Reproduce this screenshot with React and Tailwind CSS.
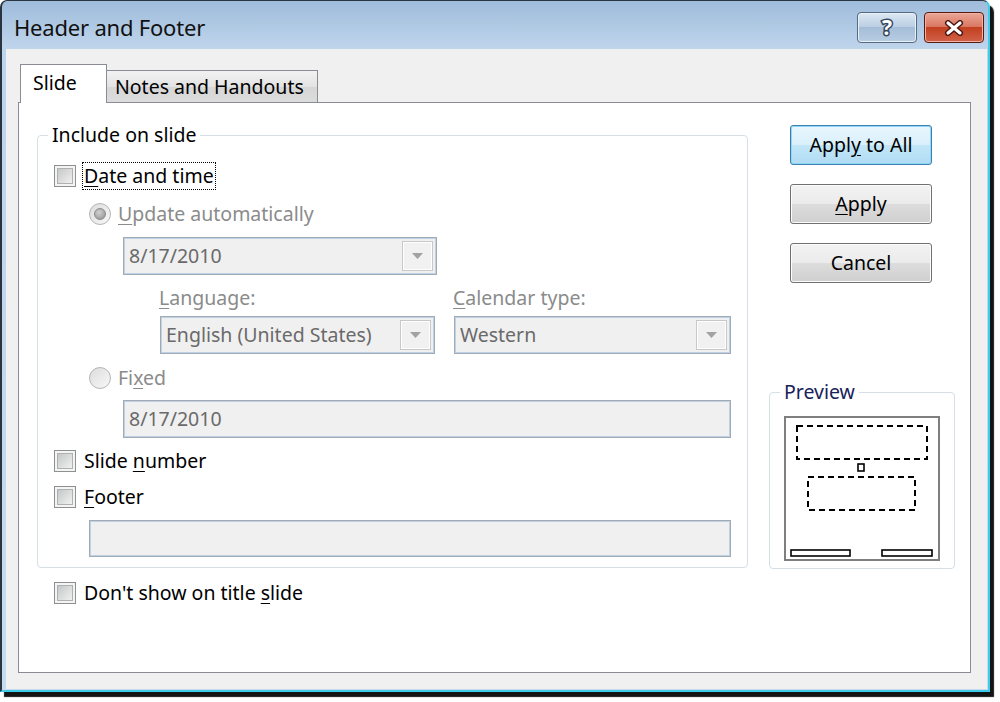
import React from 'react'

function CheckBox() {
  return (
    <div className="flex h-[22px] w-[22px] shrink-0 items-center justify-center border border-[#8e8f8f] bg-[#f4f4f4] p-[2px]">
      <div className="h-full w-full border border-[#aeb0b2] bg-[linear-gradient(135deg,#c6c7c8,#f0f0f0)]" />
    </div>
  )
}

function Radio({ checked }) {
  return (
    <div className="flex h-[22px] w-[22px] shrink-0 items-center justify-center rounded-full border border-[#b4b4b4] bg-[linear-gradient(135deg,#dcdcdc,#f8f8f8)]">
      {checked && (
        <div className="h-[12px] w-[12px] rounded-full border border-[#8a8a8a] bg-[radial-gradient(circle_at_40%_35%,#d0d0d0,#8f8f8f)]" />
      )}
    </div>
  )
}

function Field({ value, className, arrow }) {
  return (
    <div className={`flex border border-[#a3aab2] bg-[#f0f0f0] ${className}`}>
      <div className="flex flex-1 items-center border border-[#bdd1e7] pl-[4px] pr-[2px]">
        <span className="flex-1 text-[#6a6a6a]">{value}</span>
        {arrow && (
          <div className="flex h-[30px] w-[31px] items-center justify-center border border-[#c8c8c8] bg-[#f1f1f1] shadow-[inset_0_0_0_1px_#ffffff]">
            <svg width="11" height="6" viewBox="0 0 11 6">
              <path d="M0 0h11L5.5 6z" fill="#a2a2a2" />
            </svg>
          </div>
        )}
      </div>
    </div>
  )
}

function Button({ children, focused, className }) {
  return (
    <button
      className={`flex h-[40px] w-[142px] items-center justify-center rounded-[3px] border text-black ${
        focused
          ? 'border-[#3c7fb1] bg-[linear-gradient(#e9f6fd,#d9f0fc_50%,#c2e6f8_50%,#b1dcf4)] shadow-[inset_0_0_0_1px_#8fd6f7]'
          : 'border-[#707070] bg-[linear-gradient(#f2f2f2,#ebebeb_50%,#dddddd_50%,#cfcfcf)] shadow-[inset_0_0_0_1px_#fcfcfc]'
      } ${className}`}
    >
      {children}
    </button>
  )
}

export default function App() {
  return (
    <div className="h-[702px] w-[1000px] overflow-hidden bg-white font-['Noto_Sans',sans-serif] text-[19.5px] leading-none text-black">
      <div className="flex h-[692px] w-[990px] flex-col rounded-t-[7px] border-t border-r-2 border-b-2 border-l-2 border-t-[#2a3440] border-l-[#2a3440] border-r-[#3ccdea] border-b-[#3ccdea] bg-[linear-gradient(#9fbcdb,#bed4eb_46px,#c8dbee)] shadow-[4px_5px_1px_rgba(0,0,0,0.92)]">
        {/* Title bar */}
        <div className="flex h-[48px] shrink-0 items-start pl-[12px]">
          <span className="mt-[15px] text-[22px] tracking-[-0.2px] text-[#111]">Header and Footer</span>
          <div className="ml-auto mt-[11px] mr-[4px] flex gap-[7px]">
            <div className="flex h-[31px] w-[60px] items-center justify-center rounded-[4px] border border-[#55697f] bg-[linear-gradient(#dce7f3,#b9cde2_50%,#a5bdd7_50%,#b7cde3)] shadow-[inset_0_0_0_1px_#e8f0f8]">
              <span className="text-[21px] font-bold text-white [paint-order:stroke_fill] [-webkit-text-stroke:3px_#34475c]">?</span>
            </div>
            <div className="flex h-[31px] w-[60px] items-center justify-center rounded-[4px] border border-[#5a1a12] bg-[linear-gradient(#eba797,#d8755f_50%,#c2401f_50%,#d1624a)] shadow-[inset_0_0_0_1px_#f0b3a4]">
              <svg width="20" height="16" viewBox="0 0 20 16">
                <path d="M4 3l12 10M16 3L4 13" stroke="#4a1610" strokeWidth="6" strokeLinecap="round" />
                <path d="M4 3l12 10M16 3L4 13" stroke="#ffffff" strokeWidth="3.2" strokeLinecap="round" />
              </svg>
            </div>
          </div>
        </div>

        {/* Client area */}
        <div className="mb-[1px] ml-[4px] mr-[1px] flex-1 bg-[#f0f0f0] pl-[12px]">
          {/* Tabs */}
          <div className="mt-[15px] flex h-[38px] items-end pl-[2px]">
            <div className="relative z-10 -mb-px flex h-[39px] w-[87px] items-center border border-b-0 border-[#898c95] bg-white pb-[2px] pl-[12px]">
              Slide
            </div>
            <div className="flex h-[32px] w-[211px] items-center border border-b-0 border-l-0 border-[#898c95] bg-[linear-gradient(#f2f2f2,#e3e3e3_50%,#d6d6d6_50%,#dcdcdc)] pl-[8px]">
              Notes and Handouts
            </div>
          </div>

          {/* Tab panel */}
          <div className="flex h-[571px] w-[953px] border border-[#898c95] bg-white pl-[18px] pt-[19px]">
            {/* Left column */}
            <div className="w-[711px]">
              <fieldset className="rounded-[4px] border border-[#d5dfe5]">
                <legend className="ml-[10px] px-[4px] leading-[26px]">Include on slide</legend>
                <div className="flex flex-col pb-[10px] pl-[16px]">
                  <div className="mt-[14px] flex h-[28px] items-center">
                    <CheckBox />
                    <span className="ml-[6px] flex h-[28px] items-center border border-dotted border-black px-[1px]">
                      <u className="underline-offset-[3px]">D</u>ate and time
                    </span>
                  </div>
                  <div className="ml-[35px] mt-[9px] flex h-[30px] items-center text-[#8b8b8b]">
                    <Radio checked />
                    <span className="ml-[7px]">
                      <u className="underline-offset-[3px]">U</u>pdate automatically
                    </span>
                  </div>
                  <Field value="8/17/2010" arrow className="ml-[69px] mt-[8px] h-[38px] w-[314px]" />
                  <div className="ml-[105px] mt-[10px] flex h-[26px] items-center gap-[19px] text-[#8b8b8b]">
                    <span className="w-[275px]">
                      <u className="underline-offset-[3px]">L</u>anguage:
                    </span>
                    <span>
                      <u className="underline-offset-[3px]">C</u>alendar type:
                    </span>
                  </div>
                  <div className="ml-[106px] mt-[5px] flex gap-[19px]">
                    <Field value="English (United States)" arrow className="h-[38px] w-[275px]" />
                    <Field value="Western" arrow className="h-[38px] w-[277px]" />
                  </div>
                  <div className="ml-[35px] mt-[10px] flex h-[28px] items-center text-[#8b8b8b]">
                    <Radio />
                    <span className="ml-[7px]">
                      Fi<u className="underline-offset-[3px]">x</u>ed
                    </span>
                  </div>
                  <Field value="8/17/2010" className="ml-[69px] mt-[8px] h-[38px] w-[608px]" />
                  <div className="mt-[9px] flex h-[28px] items-center">
                    <CheckBox />
                    <span className="ml-[8px]">
                      Slide <u className="underline-offset-[3px]">n</u>umber
                    </span>
                  </div>
                  <div className="mt-[8px] flex h-[28px] items-center">
                    <CheckBox />
                    <span className="ml-[8px]">
                      <u className="underline-offset-[3px]">F</u>ooter
                    </span>
                  </div>
                  <Field value="" className="ml-[35px] mt-[9px] h-[37px] w-[642px]" />
                </div>
              </fieldset>
              <div className="ml-[17px] mt-[11px] flex h-[28px] items-center">
                <CheckBox />
                <span className="ml-[8px]">
                  Don't show on title <u className="underline-offset-[3px]">s</u>lide
                </span>
              </div>
            </div>

            {/* Right column */}
            <div className="ml-[21px] flex w-[186px] flex-col">
              <div className="ml-[21px] mt-[3px] flex flex-col gap-[19px]">
                <Button focused>
                  Appl<u className="underline-offset-[3px]">y</u>&nbsp;to All
                </Button>
                <Button>
                  <u className="underline-offset-[3px]">A</u>pply
                </Button>
                <Button>Cancel</Button>
              </div>
              <fieldset className="mt-[96px] rounded-[4px] border border-[#d5dfe5]">
                <legend className="ml-[10px] px-[4px] leading-[26px] text-[#17215a]">Preview</legend>
                <div className="pb-[7px] pl-[14px] pt-[11px]">
                  <div className="h-[145px] w-[156px] border-2 border-[#7f7f7f] bg-white">
                    <svg width="152" height="141" viewBox="0 0 152 141">
                      <g fill="none" stroke="#000" strokeWidth="2" strokeDasharray="6 4">
                        <rect x="11" y="8" width="130" height="33" />
                        <rect x="22" y="59" width="107" height="33" />
                      </g>
                      <rect x="72" y="46" width="6" height="7" fill="none" stroke="#000" strokeWidth="1.6" />
                      <rect x="5" y="132" width="59" height="6" fill="none" stroke="#000" strokeWidth="1.6" />
                      <rect x="96" y="132" width="50" height="6" fill="none" stroke="#000" strokeWidth="1.6" />
                    </svg>
                  </div>
                </div>
              </fieldset>
            </div>
          </div>
        </div>
      </div>
    </div>
  )
}
